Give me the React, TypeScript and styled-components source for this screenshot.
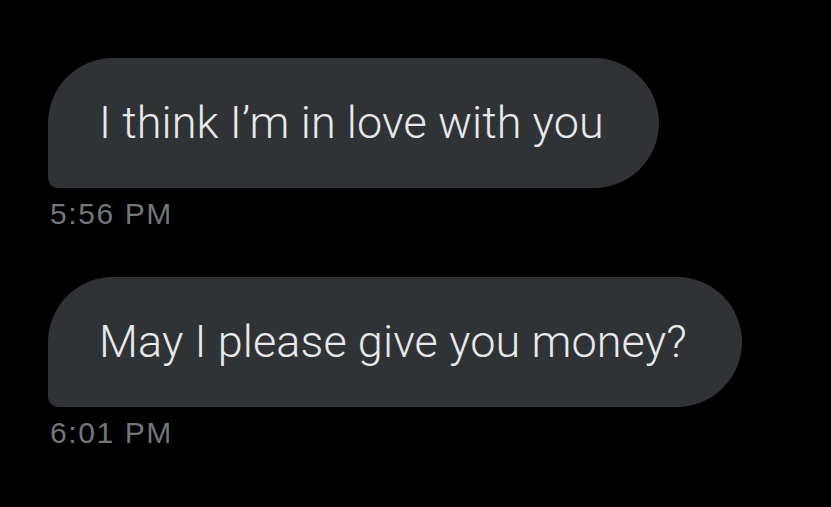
import styled, { createGlobalStyle } from "styled-components";

const GlobalStyle = createGlobalStyle`
  html, body {
    margin: 0;
    padding: 0;
    background: #000000;
  }
`;

type Message = {
  text: string;
  time: string;
};

const messages: Message[] = [
  { text: "I think I\u2019m in love with you", time: "5:56 PM" },
  { text: "May I please give you money?", time: "6:01 PM" },
];

export default function App() {
  return (
    <>
      <GlobalStyle />
      <Screen>
        {messages.map((m) => (
          <Group key={m.time}>
            <Bubble>{m.text}</Bubble>
            <Time>{m.time}</Time>
          </Group>
        ))}
      </Screen>
    </>
  );
}

const Screen = styled.div`
  width: 831px;
  height: 507px;
  box-sizing: border-box;
  background: #000000;
  padding: 58px 0 0 48px;
  display: flex;
  flex-direction: column;
  gap: 47px;
`;

const Group = styled.div`
  display: flex;
  flex-direction: column;
  align-items: flex-start;
  gap: 10px;
`;

const Bubble = styled.div`
  height: 130px;
  box-sizing: border-box;
  display: flex;
  align-items: center;
  padding: 0 55px 2px 51px;
  background: #2f3336;
  color: #e7e9ea;
  border-radius: 65px 65px 65px 10px;
  font-family: Roboto, "Liberation Sans", sans-serif;
  font-size: 45px;
  font-weight: 300;
  letter-spacing: 0.1px;
  white-space: nowrap;
`;

const Time = styled.div`
  padding-left: 2px;
  font-family: "Liberation Sans", Arial, sans-serif;
  font-size: 30px;
  letter-spacing: 1.6px;
  line-height: 32px;
  color: #71767b;
`;
